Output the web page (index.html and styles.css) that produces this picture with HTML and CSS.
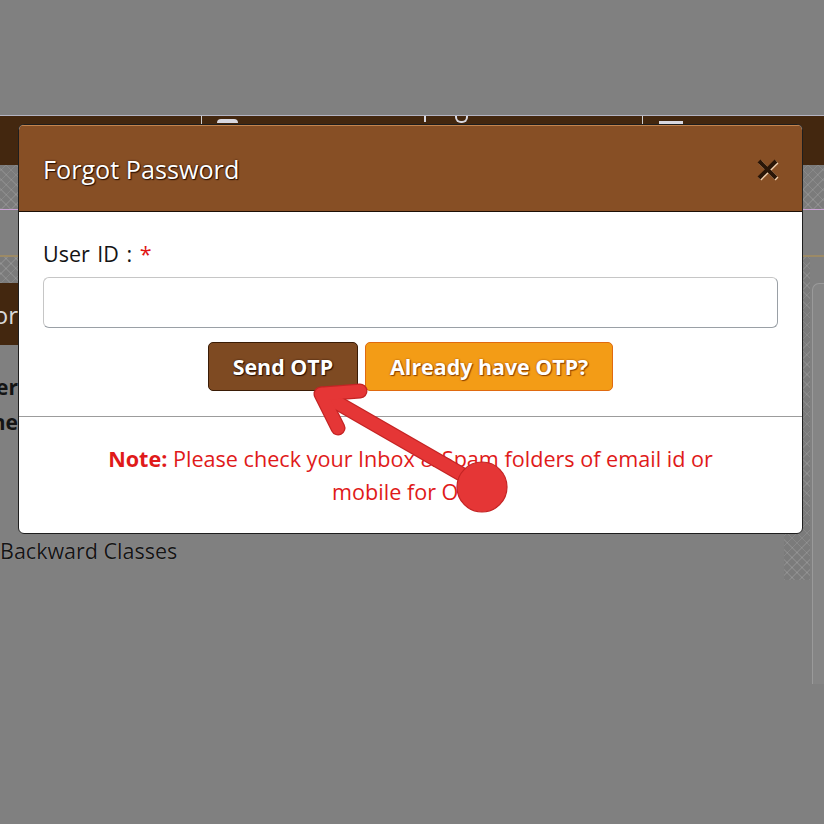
FILE: index.html
```
<!DOCTYPE html>
<html lang="en">
<head>
<meta charset="utf-8">
<title>Forgot Password</title>
<link rel="stylesheet" href="styles.css">
</head>
<body>
<div class="page">
  <div class="top"></div>
  <div class="nav">
    <div class="nav-cell nav-a"></div>
    <div class="nav-cell nav-b"><span class="nav-icon ic1"></span><span class="nav-icon ic2"></span><span class="nav-icon ic2b"></span></div>
    <div class="nav-cell nav-c"><span class="nav-icon ic3"></span></div>
  </div>
  <div class="hatch band"></div>
  <div class="band2"></div>
  <div class="main">
    <div class="content">
      <div class="hatch strip"></div>
      <div class="tab"><div class="clip"><span>Sector</span></div></div>
      <div class="lines">
        <div class="clip bold"><span>Gender</span></div>
        <div class="clip bold"><span>The</span></div>
      </div>
      <div class="backward">Backward Classes</div>
    </div>
    <div class="aside">
      <div class="hatch vstrip"></div>
      <div class="box"></div>
    </div>
  </div>
</div>

<div class="modal">
  <div class="modal-header">
    <h4 class="modal-title">Forgot Password</h4>
    <svg class="close" width="22" height="22" viewBox="0 0 22 22">
      <g stroke="#f3d2b0" stroke-width="4" stroke-linecap="butt">
        <line x1="3" y1="3" x2="20" y2="20"/>
        <line x1="20" y1="3" x2="3" y2="20"/>
      </g>
      <g stroke="#2a1608" stroke-width="4" stroke-linecap="butt">
        <line x1="2" y1="2" x2="19" y2="19"/>
        <line x1="19" y1="2" x2="2" y2="19"/>
      </g>
    </svg>
  </div>
  <div class="modal-body">
    <label class="field-label">User ID : <span class="req">*</span></label>
    <input class="field-input" type="text">
    <div class="actions">
      <button class="btn btn-brown">Send OTP</button>
      <button class="btn btn-orange">Already have OTP?</button>
    </div>
  </div>
  <div class="modal-footer">
    <p class="note"><b>Note:</b> Please check your Inbox &amp; Spam folders of email id or mobile for OTP.</p>
  </div>
</div>

<svg class="annot" width="824" height="824" viewBox="0 0 824 824">
  <g stroke="#c42424" stroke-width="15" stroke-linecap="round" stroke-linejoin="round" fill="none">
    <line x1="482" y1="486" x2="322" y2="394"/>
    <polyline points="360,391 321,394 338,428"/>
  </g>
  <g stroke="#e53636" stroke-width="12.5" stroke-linecap="round" stroke-linejoin="round" fill="none">
    <line x1="482" y1="486" x2="322" y2="394"/>
    <polyline points="360,391 321,394 338,428"/>
  </g>
  <circle cx="482" cy="487" r="25" fill="#e53636" stroke="#c42424" stroke-width="1.2"/>
</svg>
</body>
</html>
```

FILE: styles.css
```
html, body {
  margin: 0;
  padding: 0;
}
body {
  background: #808080;
  font-family: "Open Sans", "Noto Sans", sans-serif;
  width: 824px;
  height: 824px;
  overflow: hidden;
  position: relative;
}

/* ---------- dimmed page behind ---------- */
.page {
  width: 824px;
}
.top {
  height: 115px;
  border-bottom: 1px solid #b4b4c2;
}
.nav {
  height: 49px;
  background: #43270f;
  display: flex;
}
.nav-cell {
  height: 100%;
  display: flex;
  align-items: flex-start;
}
.nav-a { width: 201px; }
.nav-b { width: 440px; border-left: 1px solid #cfcfcf; }
.nav-c { flex: 1; border-left: 1px solid #cfcfcf; }
.nav-icon {
  display: block;
  background: #d8d8e0;
}
.ic1 { width: 21px; height: 4px; margin: 3px 0 0 15px; border-radius: 4px 4px 0 0; }
.ic2 { width: 2px; height: 6px; margin: 0 0 0 186px; }
.ic2b { width: 9px; height: 5px; margin: 0 0 0 29px; background: transparent; border: 2px solid #d8d8e0; border-top: 0; border-radius: 0 0 6px 6px; }
.ic3 { width: 24px; height: 3px; margin: 5px 0 0 16px; }

.hatch {
  background-color: #7b7b7b;
  background-image:
    repeating-linear-gradient(45deg, rgba(255,255,255,0.10) 0 1px, transparent 1px 7px),
    repeating-linear-gradient(-45deg, rgba(255,255,255,0.10) 0 1px, transparent 1px 7px);
}
.band {
  height: 44px;
  border-bottom: 1px solid #c8a2d2;
}
.band2 {
  height: 45px;
  background: #808080;
  border-bottom: 2px solid #9c8a66;
}
.main {
  display: flex;
}
.content {
  flex: 1;
}
.strip {
  height: 26px;
}
.tab {
  height: 62px;
  background: #43270f;
  display: flex;
  align-items: center;
  color: #d9d9d9;
  font-size: 24px;
}
.clip {
  width: 18px;
  overflow: hidden;
  display: flex;
  justify-content: flex-end;
  white-space: nowrap;
}
.lines {
  margin-top: 25px;
  line-height: 35px;
  font-size: 21px;
  color: #141414;
}
.bold { font-weight: 700; }
.backward {
  margin-top: 96px;
  line-height: 30px;
  font-size: 21.5px;
  color: #151515;
  text-shadow: 0 0 1px #aaa;
}
.aside {
  width: 40px;
  display: flex;
  gap: 2px;
}
.vstrip {
  width: 26px;
  height: 323px;
}
.box {
  flex: 1;
  margin-top: 26px;
  height: 400px;
  background: #858585;
  border-left: 1px solid #9a9a9a;
  border-top: 1px solid #9a9a9a;
  border-radius: 7px 0 0 0;
}

/* ---------- modal ---------- */
.modal {
  position: absolute;
  left: 18px;
  top: 124px;
  width: 785px;
  box-sizing: border-box;
  border: 1px solid #1e1e1e;
  border-radius: 6px;
  background: #fff;
  overflow: hidden;
}
.modal-header {
  height: 86px;
  background: #874f25;
  border-bottom: 1px solid #1c0f05;
  box-shadow: inset 0 1px 0 #c3844e;
  display: flex;
  align-items: center;
  justify-content: space-between;
  padding: 0 23px 0 24px;
}
.modal-title {
  margin: 2px 0 0;
  font-size: 25.2px;
  font-weight: 400;
  color: #fff;
  text-shadow: 0 0 2px #2a1000, 1px 1px 1px #2a1000;
  line-height: 32px;
}
.close {
  display: block;
  margin-top: 4px;
}
.modal-body {
  padding: 28px 24px 25px;
}
.field-label {
  display: block;
  font-size: 21.5px;
  line-height: 28px;
  color: #141414;
  word-spacing: 2px;
}
.req {
  color: #e01515;
}
.field-input {
  display: block;
  box-sizing: border-box;
  width: 735px;
  height: 51px;
  margin: 9px 0 0;
  border: 1px solid #c6c6c6;
  border-right-color: #9aa0a6;
  border-bottom-color: #9aa0a6;
  border-radius: 6px;
  background: #fff;
  font-family: inherit;
  font-size: 18px;
}
.actions {
  margin-top: 14px;
  display: flex;
  justify-content: center;
  gap: 7px;
}
.btn {
  height: 49px;
  box-sizing: border-box;
  padding: 0 24px;
  border-radius: 5px;
  font-family: "Open Sans", sans-serif;
  font-size: 21.4px;
  font-weight: 700;
  color: #fff;
  text-shadow: 0 0 2px #2b1100, 1px 1px 1px #2b1100;
  cursor: pointer;
}
.btn-brown {
  background: #7e4a22;
  border: 1px solid #3a1c06;
}
.btn-orange {
  background: #f39c16;
  border: 1px solid #e06a10;
  text-shadow: 0 0 2px #9a4a00, 1px 1px 1px #8a3f00;
}
.modal-footer {
  border-top: 1px solid #9c9c9c;
  padding: 25px 60px 25px;
}
.note {
  margin: 0;
  text-align: center;
  font-size: 21.6px;
  line-height: 33px;
  color: #e01a1a;
}
.note b {
  font-weight: 700;
}

/* ---------- annotation ---------- */
.annot {
  position: absolute;
  left: 0;
  top: 0;
  pointer-events: none;
}
```
